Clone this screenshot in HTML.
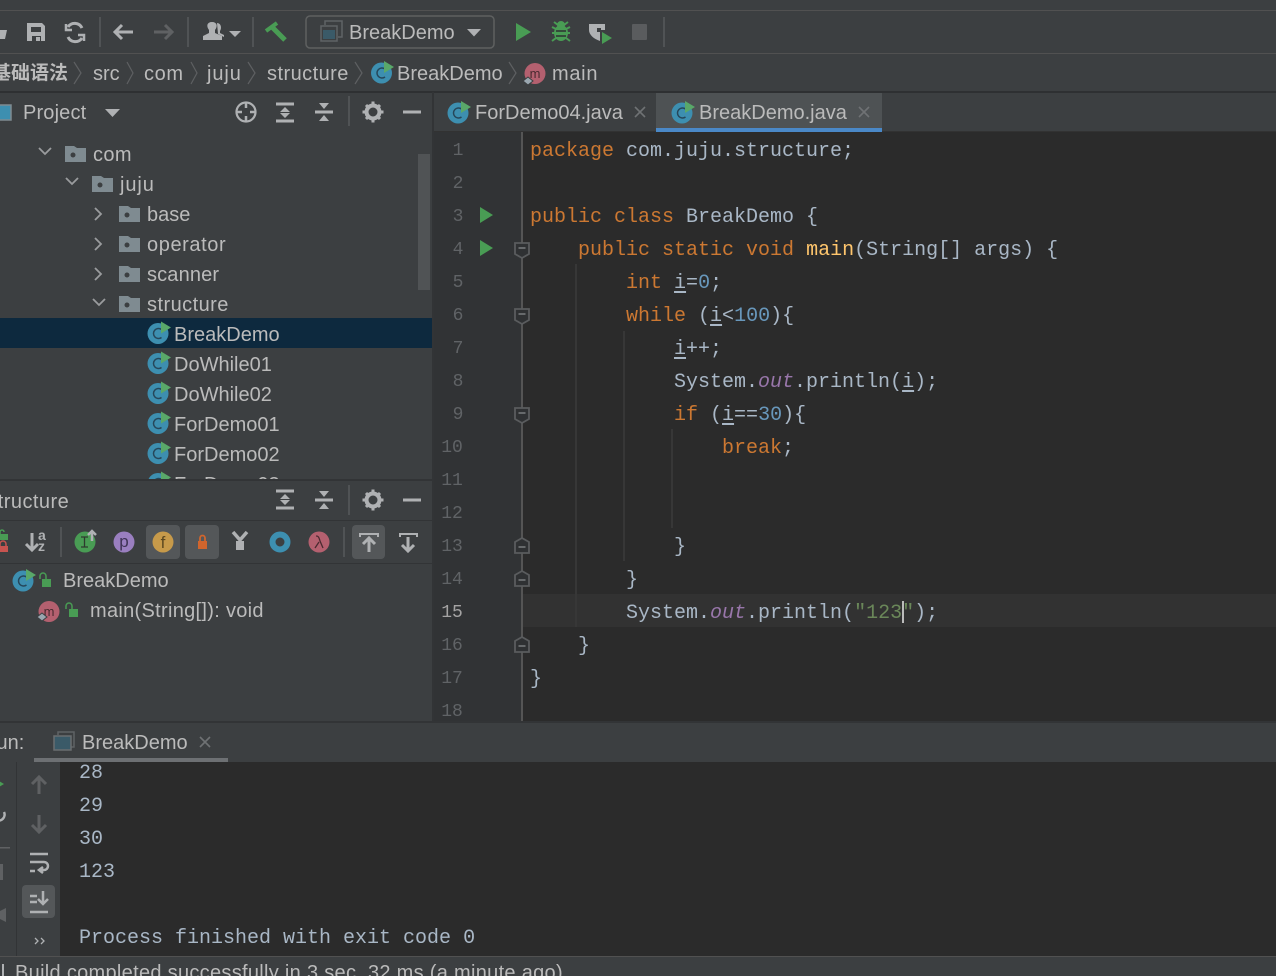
<!DOCTYPE html>
<html><head><meta charset="utf-8">
<style>
html,body{margin:0;padding:0;background:#3c3f41}
#r{position:relative;width:1276px;height:976px;overflow:hidden;background:#3c3f41;font-family:"Liberation Sans","Noto Sans CJK SC",sans-serif;font-size:20px;color:#bbbbbb}
.a{position:absolute}
.t{position:absolute;white-space:pre;line-height:30px;height:30px}
.c{position:absolute;white-space:pre;font-family:"Liberation Mono",monospace;font-size:20px;line-height:33px;height:33px;color:#a9b7c6}
.n{position:absolute;font-family:"Liberation Mono",monospace;font-size:18px;line-height:33px;color:#606366;width:30px;text-align:center}
.k{color:#cc7832}.m{color:#ffc66d}.d{color:#6897bb}.s{color:#6a8759}.p{color:#9876aa;font-style:italic}
.u{text-decoration:underline;text-underline-offset:3px}
svg{position:absolute;overflow:visible}
svg text{font-family:"Liberation Sans",sans-serif}
</style></head><body><div id="r">
<!-- lines -->
<div class="a" style="left:0;top:10px;width:1276px;height:1px;background:#515151"></div>
<div class="a" style="left:0;top:53px;width:1276px;height:1px;background:#515151"></div>
<div class="a" style="left:0;top:91px;width:1276px;height:2px;background:#2e3032"></div>

<!-- Toolbar -->
<svg style="left:0;top:0" width="700" height="54" fill="none">
 <path d="M-2 30h9l-2 9h-7z" fill="#afb1b3"/>
 <path d="M27 23h15l3 3v15H27z" fill="#afb1b3"/>
 <rect x="31" y="27" width="10" height="5" fill="#3c3f41"/>
 <rect x="32" y="36" width="9" height="5" fill="#3c3f41"/><rect x="36" y="37" width="4" height="4" fill="#afb1b3"/>
 <path d="M82 28a8 8 0 0 0-14-1M68 37a8 8 0 0 0 14 1" stroke="#afb1b3" stroke-width="3"/>
 <path d="M66 24v6h6M84 41v-6h-6" stroke="#afb1b3" stroke-width="2.500"/>
 <rect x="99" y="17" width="2" height="30" fill="#505355"/>
 <path d="M133 32h-18M122 25l-7 7 7 7" stroke="#afb1b3" stroke-width="3"/>
 <path d="M154 32h18M165 25l7 7-7 7" stroke="#5f6163" stroke-width="3"/>
 <rect x="187" y="17" width="2" height="30" fill="#505355"/>
 <path d="M203 40v-4l6-3v-3c-3-4-2-8 3-8s6 4 3 8v3l7 3v4z" fill="#afb1b3"/>
 <path d="M217 23c4 0 5 5 3 8v2l4 2v2l-6-3z" fill="#afb1b3"/>
 <path d="M229 31h12l-6 6z" fill="#afb1b3"/>
 <rect x="252" y="17" width="2" height="30" fill="#505355"/>
 <path d="M266 31l11-8" stroke="#499c54" stroke-width="4"/>
 <path d="M272 27l13 13" stroke="#499c54" stroke-width="5"/>
 <rect x="306" y="16" width="188" height="32" rx="4" fill="#3c3f41" stroke="#5e6060" stroke-width="1.500"/>
 <path d="M325 25v-4h17v16h-4" stroke="#5f6366" stroke-width="1.500"/>
 <rect x="321" y="26" width="16" height="15" fill="#3c3f41" stroke="#5f6366" stroke-width="1.500"/>
 <rect x="323" y="30" width="12" height="9" fill="#3a5a68"/>
 <path d="M467 29h14l-7 7.500z" fill="#afb1b3"/>
 <path d="M516 23l15 9-15 9z" fill="#499c54"/>
 <ellipse cx="561" cy="33" rx="7" ry="8" fill="#499c54"/>
 <circle cx="561" cy="25" r="4" fill="#499c54"/>
 <path d="M554 22l4 3M568 22l-4 3M552 33h18M552 41l4-3M570 41l-4-3M552 27l4 2M570 27l-4 2" stroke="#499c54" stroke-width="2"/>
 <path d="M556 31h10M556 36h10" stroke="#2e3032" stroke-width="1.500"/>
 <path d="M589 24h16v6h-5v11c-6-2-11-6-11-11z" fill="#afb1b3"/>
 <path d="M597 28h4v4h-4z" fill="#3c3f41"/>
 <path d="M602 32l10 6-10 6z" fill="#499c54"/>
 <rect x="632" y="24" width="15" height="16" rx="1" fill="#5a5c5e"/>
 <rect x="663" y="17" width="2" height="30" fill="#505355"/>
</svg>
<div class="t" style="left:349px;top:18px">BreakDemo</div>

<!-- Breadcrumb -->
<div class="t" style="left:-8px;top:59px;font-weight:bold;font-size:19px">基础语法</div>
<div class="t" style="left:93px;top:59px">src</div>
<div class="t" style="left:144px;top:59px;letter-spacing:.6px">com</div>
<div class="t" style="left:207px;top:59px;letter-spacing:.9px">juju</div>
<div class="t" style="left:267px;top:59px;letter-spacing:.45px">structure</div>
<div class="t" style="left:397px;top:59px">BreakDemo</div>
<div class="t" style="left:552px;top:59px;letter-spacing:.7px">main</div>
<svg style="left:0;top:0" width="600" height="92" fill="none">
 <path d="M74 62l7 11-7 11M127 62l6 11-6 11M191 62l6 11-6 11M248 62l7 11-7 11M355 62l7 11-7 11M509 62l7 11-7 11" stroke="#5e6062" stroke-width="1.200"/>
 <circle cx="381.500" cy="73" r="10.500" fill="#3d8fb0"/><path d="M385 69a5 5 0 1 0 0 8" stroke="#26475a" stroke-width="1.500"/><path d="M384 61l10 6-10 6z" fill="#59a869"/>
 <circle cx="535" cy="73.500" r="10.500" fill="#b4606f"/>
 <text x="535" y="78" font-size="13" text-anchor="middle" fill="#4a2a30">m</text>
 <path d="M528 77l5 4-5 4-5-4z" fill="#9aa7b0" stroke="#3c3f41"/>
</svg>

<!-- Project header -->
<div class="t" style="left:23px;top:98px;letter-spacing:.15px">Project</div>
<svg style="left:0;top:92px" width="432" height="40" fill="none">
 <rect x="-3" y="13" width="14" height="15" fill="#3d8fb0" stroke="#7f8b91" stroke-width="1.500"/>
 <path d="M105 17h15l-7.500 8z" fill="#afb1b3"/>
 <circle cx="246" cy="20" r="9.500" stroke="#afb1b3" stroke-width="2.200"/>
 <path d="M246 10v6M246 24v6M236 20h6M250 20h6" stroke="#afb1b3" stroke-width="2.500"/>
 <path d="M276 12h18M276 29h18" stroke="#afb1b3" stroke-width="3"/>
 <path d="M285 15l-5 5h10zM285 26l-5-5h10z" fill="#afb1b3"/>
 <path d="M315 20h18" stroke="#afb1b3" stroke-width="3"/>
 <path d="M319 11h10l-5 6zM319 29h10l-5-6z" fill="#afb1b3"/>
 <rect x="348" y="4" width="2" height="30" fill="#505355"/>
 <circle cx="373" cy="20" r="6.500" stroke="#afb1b3" stroke-width="4"/>
 <path d="M373 9.500v21M362.500 20h21M366 13l14 14M380 13l-14 14" stroke="#afb1b3" stroke-width="3" stroke-dasharray="3 15"/>
 <path d="M403 20h18" stroke="#afb1b3" stroke-width="3"/>
</svg>

<!-- Tree -->
<div class="a" style="left:0;top:318px;width:432px;height:30px;background:#0d293e"></div>
<div class="t" style="left:93px;top:140px;letter-spacing:.4px">com</div>
<div class="t" style="left:120px;top:170px;letter-spacing:.9px">juju</div>
<div class="t" style="left:147px;top:200px">base</div>
<div class="t" style="left:147px;top:230px;letter-spacing:.6px">operator</div>
<div class="t" style="left:147px;top:260px;letter-spacing:.15px">scanner</div>
<div class="t" style="left:147px;top:290px;letter-spacing:.45px">structure</div>
<div class="t" style="left:174px;top:320px">BreakDemo</div>
<div class="t" style="left:174px;top:350px">DoWhile01</div>
<div class="t" style="left:174px;top:380px">DoWhile02</div>
<div class="t" style="left:174px;top:410px">ForDemo01</div>
<div class="t" style="left:174px;top:440px">ForDemo02</div>
<div class="t" style="left:174px;top:470px">ForDemo03</div>
<svg style="left:0;top:132px" width="432" height="348" fill="none">
 <defs>
  <g id="fo"><path d="M0 2h9l3 2h9v14H0z" fill="#7f8b91"/><circle cx="8" cy="11" r="2.500" fill="#3c3f41"/></g>
  <g id="cl"><circle cx="11" cy="11" r="10.500" fill="#3d8fb0"/><path d="M14.500 7a5 5 0 1 0 0 8" stroke="#26475a" stroke-width="1.500" fill="none"/><path d="M14 -1l10 6-10 6z" fill="#59a869"/></g>
 </defs>
 <path d="M39 16l6 6 6-6M66 46l6 6 6-6M93 167l6 6 6-6" stroke="#9a9c9e" stroke-width="1.800"/>
 <path d="M95 76l6 6-6 6M95 106l6 6-6 6M95 136l6 6-6 6" stroke="#9a9c9e" stroke-width="1.800"/>
 <use href="#fo" x="65" y="12"/><use href="#fo" x="92" y="42"/><use href="#fo" x="119" y="72"/><use href="#fo" x="119" y="102"/><use href="#fo" x="119" y="132"/><use href="#fo" x="119" y="162"/>
 <use href="#cl" x="147" y="190.500"/><use href="#cl" x="147" y="220.500"/><use href="#cl" x="147" y="250.500"/><use href="#cl" x="147" y="280.500"/><use href="#cl" x="147" y="310.500"/><use href="#cl" x="147" y="340.500"/>
 <rect x="418" y="22" width="12" height="136" fill="#505355"/>
</svg>

<!-- Structure panel -->
<div class="a" style="left:0;top:480px;width:432px;height:241px;background:#3c3f41"></div>
<div class="a" style="left:0;top:479px;width:432px;height:2px;background:#323436"></div>
<div class="a" style="left:0;top:520px;width:432px;height:1px;background:#323436"></div>
<div class="a" style="left:0;top:563px;width:432px;height:1px;background:#323436"></div>
<div class="t" style="left:-16px;top:487px;letter-spacing:.45px">Structure</div>
<svg style="left:0;top:480px" width="432" height="240" fill="none">
 <path d="M276 11h18M276 28h18" stroke="#afb1b3" stroke-width="3"/>
 <path d="M285 14l-5 5h10zM285 25l-5-5h10z" fill="#afb1b3"/>
 <path d="M315 20h18" stroke="#afb1b3" stroke-width="3"/>
 <path d="M319 11h10l-5 6zM319 29h10l-5-6z" fill="#afb1b3"/>
 <rect x="348" y="5" width="2" height="30" fill="#505355"/>
 <circle cx="373" cy="20" r="6.500" stroke="#afb1b3" stroke-width="4"/>
 <path d="M373 9.500v21M362.500 20h21M366 13l14 14M380 13l-14 14" stroke="#afb1b3" stroke-width="3" stroke-dasharray="3 15"/>
 <path d="M403 20h18" stroke="#afb1b3" stroke-width="3"/>
 <!-- filters -->
 <rect x="-2" y="54" width="10" height="6" fill="#499c54"/><path d="M0 54v-2a2 2 0 0 1 4 0" stroke="#499c54" stroke-width="1.500"/>
 <rect x="-2" y="66" width="10" height="6" fill="#c75450"/><path d="M0 66v-2a3 3 0 0 1 6 0v2" stroke="#c75450" stroke-width="1.500"/>
 <path d="M32 53v17M26 64l6 6 6-6" stroke="#afb1b3" stroke-width="3"/>
 <text x="38" y="60" font-size="14" font-weight="bold" fill="#afb1b3">a</text>
 <text x="38" y="71" font-size="14" font-weight="bold" fill="#afb1b3">z</text>
 <rect x="60" y="47" width="2" height="30" fill="#505355"/>
 <rect x="146" y="45" width="34" height="34" rx="4" fill="#545759"/>
 <rect x="185" y="45" width="34" height="34" rx="4" fill="#545759"/>
 <rect x="343" y="47" width="2" height="30" fill="#505355"/>
 <rect x="352" y="45" width="33" height="34" rx="4" fill="#545759"/>
 <circle cx="85" cy="62" r="10.500" fill="#499c54"/>
 <path d="M81 57h7M84.500 57v10M81 67h7" stroke="#2e3a2e" stroke-width="1.300"/>
 <path d="M92 61v-10M88 55l4-4 4 4" stroke="#afb1b3" stroke-width="2.500"/>
 <circle cx="124" cy="62" r="10.500" fill="#9a7fc0"/>
 <text x="124" y="67" font-size="17" text-anchor="middle" fill="#3f3355">p</text>
 <circle cx="163" cy="62" r="10.500" fill="#c79a4a"/>
 <text x="163" y="68" font-size="17" text-anchor="middle" fill="#5c4820">f</text>
 <rect x="198" y="61" width="9" height="8" fill="#d0652d"/><path d="M200 61v-3a2.500 2.500 0 0 1 5 0v3" stroke="#d0652d" stroke-width="1.800"/>
 <path d="M233 52l7 8 7-8" stroke="#afb1b3" stroke-width="3.500"/><rect x="236" y="61" width="8" height="9" fill="#afb1b3"/>
 <circle cx="280" cy="62" r="7.500" stroke="#3d8fb0" stroke-width="6"/>
 <circle cx="319" cy="62" r="10.500" fill="#b4606f"/>
 <path d="M315 68l4-6M316 56c3 0 3 2 4 5l3 7" stroke="#4a2a30" stroke-width="1.300"/>
 <path d="M360 57v-3h18v3" stroke="#afb1b3" stroke-width="2"/>
 <path d="M369 72v-14M363 64l6-6 6 6" stroke="#afb1b3" stroke-width="3"/>
 <path d="M400 57v-3h17v3" stroke="#afb1b3" stroke-width="2"/>
 <path d="M408 57v14M402 65l6 6 6-6" stroke="#afb1b3" stroke-width="3"/>
 <!-- tree icons -->
 <use href="#cl" x="12" y="90"/>
 <path d="M40 99v-3a3 3 0 0 1 6 0v3" stroke="#499c54" stroke-width="1.500"/><rect x="42" y="99" width="9" height="8" fill="#499c54"/>
 <circle cx="49" cy="131.500" r="10.500" fill="#b4606f"/>
 <text x="49" y="136" font-size="13" text-anchor="middle" fill="#4a2a30">m</text>
 <path d="M42 133l5 4-5 4-5-4z" fill="#9aa7b0" stroke="#3c3f41"/>
 <path d="M66 129v-3a3 3 0 0 1 6 0v3" stroke="#499c54" stroke-width="1.500"/><rect x="69" y="129" width="9" height="8" fill="#499c54"/>
</svg>
<div class="t" style="left:63px;top:566px">BreakDemo</div>
<div class="t" style="left:90px;top:596px;letter-spacing:.3px">main(String[]): void</div>

<!-- Tabs -->
<div class="a" style="left:432px;top:92px;width:2px;height:630px;background:#323436"></div>
<div class="a" style="left:656px;top:93px;width:226px;height:35px;background:#4e5254"></div>
<div class="a" style="left:434px;top:131px;width:842px;height:1px;background:#323232"></div>
<div class="a" style="left:656px;top:128px;width:226px;height:4px;background:#4a88c7"></div>
<div class="t" style="left:475px;top:98px">ForDemo04.java</div>
<div class="t" style="left:699px;top:98px">BreakDemo.java</div>
<svg style="left:0;top:92px" width="900" height="40" fill="none">
 <use href="#cl" x="447" y="10"/><use href="#cl" x="671" y="10"/>
 <path d="M635 15l10 10M645 15l-10 10M859 15l10 10M869 15l-10 10" stroke="#6f7274" stroke-width="1.600"/>
</svg>

<!-- Editor -->
<div class="a" style="left:434px;top:132px;width:842px;height:589px;background:#2b2b2b"></div>
<div class="a" style="left:434px;top:132px;width:88px;height:589px;background:#313335"></div>
<div class="a" style="left:522px;top:594px;width:754px;height:33px;background:#323232"></div>
<div class="a" style="left:521px;top:132px;width:2px;height:589px;background:#555555"></div>
<div class="a" style="left:575px;top:264px;width:2px;height:363px;background:#373737"></div>
<div class="a" style="left:623px;top:331px;width:2px;height:230px;background:#373737"></div>
<div class="a" style="left:671px;top:429px;width:2px;height:99px;background:#373737"></div>
<div class="n" style="left:443px;top:135px">1</div>
<div class="n" style="left:443px;top:168px">2</div>
<div class="n" style="left:443px;top:201px">3</div>
<div class="n" style="left:443px;top:234px">4</div>
<div class="n" style="left:443px;top:267px">5</div>
<div class="n" style="left:443px;top:300px">6</div>
<div class="n" style="left:443px;top:333px">7</div>
<div class="n" style="left:443px;top:366px">8</div>
<div class="n" style="left:443px;top:399px">9</div>
<div class="n" style="left:437px;top:432px">10</div>
<div class="n" style="left:437px;top:465px">11</div>
<div class="n" style="left:437px;top:498px">12</div>
<div class="n" style="left:437px;top:531px">13</div>
<div class="n" style="left:437px;top:564px">14</div>
<div class="n" style="left:437px;top:597px;color:#a4a3a3">15</div>
<div class="n" style="left:437px;top:630px">16</div>
<div class="n" style="left:437px;top:663px">17</div>
<div class="n" style="left:437px;top:696px">18</div>
<div class="c" style="left:530px;top:135px"><span class="k">package</span> com.juju.structure;</div>
<div class="c" style="left:530px;top:201px"><span class="k">public class</span> BreakDemo {</div>
<div class="c" style="left:578px;top:234px"><span class="k">public static void</span> <span class="m">main</span>(String[] args) {</div>
<div class="c" style="left:626px;top:267px"><span class="k">int</span> <span class="u">i</span>=<span class="d">0</span>;</div>
<div class="c" style="left:626px;top:300px"><span class="k">while</span> (<span class="u">i</span>&lt;<span class="d">100</span>){</div>
<div class="c" style="left:674px;top:333px"><span class="u">i</span>++;</div>
<div class="c" style="left:674px;top:366px">System.<span class="p">out</span>.println(<span class="u">i</span>);</div>
<div class="c" style="left:674px;top:399px"><span class="k">if</span> (<span class="u">i</span>==<span class="d">30</span>){</div>
<div class="c" style="left:722px;top:432px"><span class="k">break</span>;</div>
<div class="c" style="left:674px;top:531px">}</div>
<div class="c" style="left:626px;top:564px">}</div>
<div class="c" style="left:626px;top:597px">System.<span class="p">out</span>.println(<span class="s">"123"</span>);</div>
<div class="c" style="left:578px;top:630px">}</div>
<div class="c" style="left:530px;top:663px">}</div>
<div class="a" style="left:902px;top:601px;width:2px;height:22px;background:#bbbbbb"></div>
<svg style="left:434px;top:132px" width="100" height="590" fill="none">
 <defs>
  <g id="fd"><path d="M-7 -7h14v11l-7 4-7-4z" fill="#2f3133" stroke="#5a5c5e" stroke-width="1.800"/><path d="M-3.500 -2h7" stroke="#7a7d7f" stroke-width="1.500"/></g>
  <g id="fu"><path d="M-7 7h14v-11l-7-4-7 4z" fill="#2f3133" stroke="#5a5c5e" stroke-width="1.800"/><path d="M-3.500 1h7" stroke="#7a7d7f" stroke-width="1.500"/></g>
 </defs>
 <path d="M46 75l13 8-13 8zM46 108l13 8-13 8z" fill="#499c54"/>
 <use href="#fd" x="88" y="118"/><use href="#fd" x="88" y="184"/><use href="#fd" x="88" y="283"/>
 <use href="#fu" x="88" y="414"/><use href="#fu" x="88" y="447"/><use href="#fu" x="88" y="513"/>
</svg>

<!-- Run panel -->
<div class="a" style="left:0;top:721px;width:1276px;height:2px;background:#323436"></div>
<div class="a" style="left:0;top:723px;width:1276px;height:39px;background:#3c3f41"></div>
<div class="a" style="left:34px;top:758px;width:194px;height:4px;background:#6d7073"></div>
<div class="t" style="left:-18px;top:728px">Run:</div>
<div class="t" style="left:82px;top:728px">BreakDemo</div>
<svg style="left:0;top:723px" width="240" height="40" fill="none">
 <path d="M58 12v-3h16v15h-3" stroke="#5f6366" stroke-width="1.500"/>
 <rect x="54" y="13" width="17" height="14" fill="#3a5a68" stroke="#6a6e70" stroke-width="1.500"/>
 <path d="M200 14l10 10M210 14l-10 10" stroke="#6f7274" stroke-width="1.600"/>
</svg>
<div class="a" style="left:0;top:762px;width:60px;height:194px;background:#3c3f41"></div>
<div class="a" style="left:16px;top:762px;width:1px;height:194px;background:#323436"></div>
<div class="a" style="left:60px;top:762px;width:1216px;height:194px;background:#2b2b2b"></div>
<svg style="left:0;top:762px" width="60" height="194" fill="none">
 <path d="M-6 16l10 6-10 6z" fill="#499c54"/>
 <path d="M4 50a6 6 0 0 1-8 8" stroke="#afb1b3" stroke-width="2.500"/>
 <rect x="-4" y="85" width="14" height="1.500" fill="#5f6163"/>
 <rect x="-1" y="102" width="4" height="16" fill="#5f6163"/>
 <path d="M-2 150l8-4v14l-8-4z" fill="#5f6163"/>
 <path d="M39 32v-17M32 22l7-7 7 7" stroke="#5f6163" stroke-width="3"/>
 <path d="M39 53v17M32 63l7 7 7-7" stroke="#5f6163" stroke-width="3"/>
 <path d="M30 92h18M30 100h14a4 4 0 0 1 0 8h-4M30 109h5M43 105l-4 3 4 3" stroke="#afb1b3" stroke-width="2.500"/>
 <rect x="22" y="123" width="33" height="33" rx="4" fill="#545759"/>
 <path d="M30 140h7M30 134h7M30 150h18M43 129v13M38 137l5 5 5-5" stroke="#afb1b3" stroke-width="2.500"/>
 <path d="M35 176l3 3-3 3M41 176l3 3-3 3" stroke="#afb1b3" stroke-width="1.300"/>
</svg>
<div class="c" style="left:79px;top:757px">28</div>
<div class="c" style="left:79px;top:790px">29</div>
<div class="c" style="left:79px;top:823px">30</div>
<div class="c" style="left:79px;top:856px">123</div>
<div class="c" style="left:79px;top:922px">Process finished with exit code 0</div>

<!-- Status bar -->
<div class="a" style="left:0;top:956px;width:1276px;height:20px;background:#3c3f41;border-top:1px solid #515151;box-sizing:border-box"></div>
<div class="t" style="left:15px;top:958px;letter-spacing:.3px">Build completed successfully in 3 sec, 32 ms (a minute ago)</div>
<div class="a" style="left:2px;top:964px;width:2px;height:12px;background:#afb1b3"></div>
</div></body></html>
